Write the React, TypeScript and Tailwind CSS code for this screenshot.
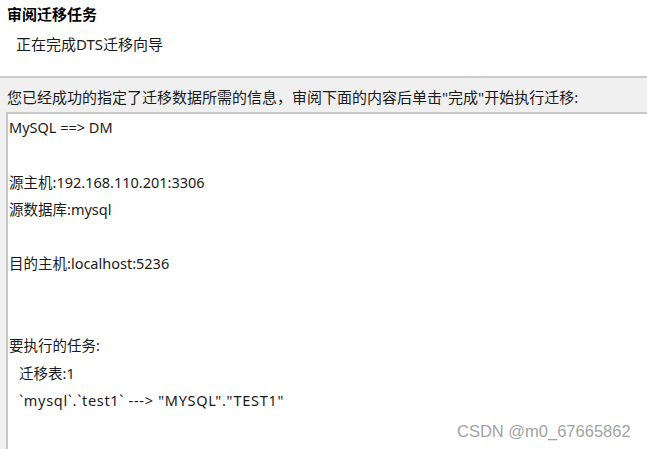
import React from 'react'

// Summary lines shown in the review box; indent marks the task sub-items
const summary: { text: string; indent?: boolean; wide?: boolean }[] = [
  { text: 'MySQL ==> DM' },
  { text: '' },
  { text: '源主机:192.168.110.201:3306' },
  { text: '源数据库:mysql' },
  { text: '' },
  { text: '目的主机:localhost:5236' },
  { text: '' },
  { text: '' },
  { text: '要执行的任务:' },
  { text: '迁移表:1', indent: true },
  { text: '`mysql`.`test1` ---> "MYSQL"."TEST1"', indent: true, wide: true },
]

export default function App() {
  return (
    <div
      className="relative flex h-[449px] w-[647px] flex-col overflow-hidden bg-white text-[#1a1a1a]"
      style={{ fontFamily: '"Noto Sans", "Noto Sans CJK SC", sans-serif' }}
    >
      <div className="h-[76px] shrink-0 bg-white">
        <h1 className="pl-[7px] pt-[4px] text-[15px] font-bold leading-[20px] text-black">审阅迁移任务</h1>
        <p className="pl-[16px] pt-[10px] text-[15px] leading-[20px]">正在完成DTS迁移向导</p>
      </div>
      <div className="h-[2px] shrink-0 bg-[#cdcdcd]" />

      <div className="flex flex-1 flex-col bg-[#f0f0f0] pl-[6px]">
        <p className="pl-[1px] pt-[9px] text-[15px] leading-[20px] whitespace-nowrap">
          您已经成功的指定了迁移数据所需的信息，审阅下面的内容后单击"完成"开始执行迁移:
        </p>
        <div className="mt-[5px] flex-1 border-l-2 border-t-2 border-[#c8c8c8] bg-white pl-[1px]">
          {summary.map((line, i) => (
            <div
              key={i}
              className={`h-[27.3px] text-[14.5px] leading-[27.3px] whitespace-pre ${line.indent ? 'pl-[10px]' : ''} ${line.wide ? 'tracking-[0.7px]' : ''}`}
            >
              {line.text}
            </div>
          ))}
        </div>
      </div>

      <span
        className="absolute left-[457px] top-[420px] text-[16.5px] leading-[22px] text-[#a3a3a3]"
        style={{ fontFamily: '"Liberation Sans", Arial, sans-serif' }}
      >
        CSDN @m0_67665862
      </span>
    </div>
  )
}
